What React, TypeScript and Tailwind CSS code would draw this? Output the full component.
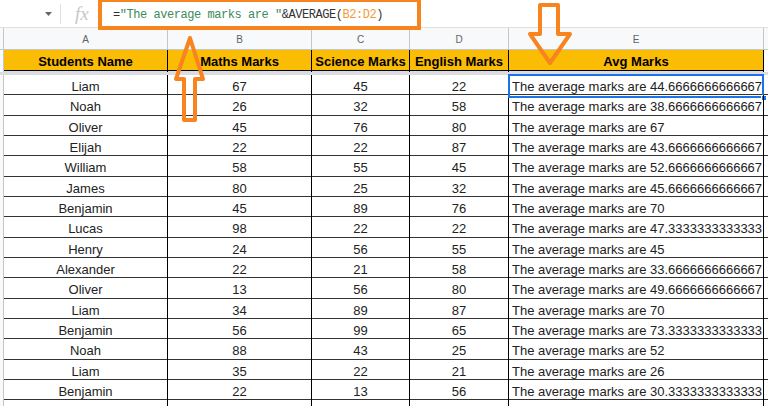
import React from 'react';

type Row = { name: string; maths: number; science: number; english: number };

const rows: Row[] = [
  { name: 'Liam', maths: 67, science: 45, english: 22 },
  { name: 'Noah', maths: 26, science: 32, english: 58 },
  { name: 'Oliver', maths: 45, science: 76, english: 80 },
  { name: 'Elijah', maths: 22, science: 22, english: 87 },
  { name: 'William', maths: 58, science: 55, english: 45 },
  { name: 'James', maths: 80, science: 25, english: 32 },
  { name: 'Benjamin', maths: 45, science: 89, english: 76 },
  { name: 'Lucas', maths: 98, science: 22, english: 22 },
  { name: 'Henry', maths: 24, science: 56, english: 55 },
  { name: 'Alexander', maths: 22, science: 21, english: 58 },
  { name: 'Oliver', maths: 13, science: 56, english: 80 },
  { name: 'Liam', maths: 34, science: 89, english: 87 },
  { name: 'Benjamin', maths: 56, science: 99, english: 65 },
  { name: 'Noah', maths: 88, science: 43, english: 25 },
  { name: 'Liam', maths: 35, science: 22, english: 21 },
  { name: 'Benjamin', maths: 22, science: 13, english: 56 },
];

// sheets prints 15 significant digits
const avgText = (r: Row) => {
  const avg = (r.maths + r.science + r.english) / 3;
  return `The average marks are ${parseFloat(avg.toPrecision(15))}`;
};

const cols = 'grid grid-cols-[4px_164px_144px_98px_99px_255px_4px]';

function LetterRow() {
  const letters = ['A', 'B', 'C', 'D', 'E'];
  return (
    <div className={`${cols} h-[22px] bg-[#f8f9fa] border-b border-[#c4c7c5]`}>
      <div className="bg-[#f8f9fa] border-r border-[#c4c7c5]" />
      {letters.map((l) => (
        <div
          key={l}
          className="flex items-center justify-center border-r border-[#c4c7c5] pt-[2px] text-[10px] text-[#5f6368]"
        >
          {l}
        </div>
      ))}
      <div />
    </div>
  );
}

function HeaderRow() {
  const heads = ['Students Name', 'Maths Marks', 'Science Marks', 'English Marks', 'Avg Marks'];
  return (
    <div className={`${cols} h-[21px] border-b border-black bg-[#fbbc04]`}>
      <div className="bg-[#f8f9fa] border-r border-[#c4c7c5]" />
      {heads.map((h) => (
        <div
          key={h}
          className="flex items-center justify-center whitespace-nowrap border-r border-black pt-[2px] text-[13px] font-bold text-black"
        >
          {h}
        </div>
      ))}
      <div className="bg-white" />
    </div>
  );
}

function DataRow({ row, selected }: { row?: Row; selected?: boolean }) {
  const cell = 'flex items-center justify-center border-r border-black pt-[2px]';
  return (
    <div className={`${cols} h-[20.33px] border-b border-[#333] text-[13px] text-[#222]`}>
      <div className="bg-[#f8f9fa] border-r border-[#c4c7c5]" />
      <div className={cell}>{row?.name}</div>
      <div className={cell}>{row?.maths}</div>
      <div className={cell}>{row?.science}</div>
      <div className={cell}>{row?.english}</div>
      <div className="relative flex items-center whitespace-nowrap border-r border-black pl-[3px] pt-[2px]">
        {row && avgText(row)}
        {selected && (
          <>
            <div className="absolute -inset-px border-2 border-[#1a73e8]" />
            <div className="absolute -bottom-[4px] -right-[4px] h-[6px] w-[6px] border border-white bg-[#1a73e8]" />
          </>
        )}
      </div>
      <div />
    </div>
  );
}

function FormulaBar() {
  return (
    <div className="flex h-[28px] items-center border-b border-[#e0e0e0] bg-white">
      <div className="flex w-[60px] justify-end pr-[8px]">
        <svg width="7" height="4" viewBox="0 0 7 4">
          <path d="M0 0h7L3.5 4z" fill="#666" />
        </svg>
      </div>
      <div className="h-[20px] w-px bg-[#e0e0e0]" />
      <div className="w-[52px] pl-[14px] font-['Liberation_Serif',serif] text-[19px] italic leading-none text-[#c8c8c8]">
        fx
      </div>
      <div className="pt-[3px] font-['Liberation_Mono',monospace] text-[12px] tracking-[-0.45px] whitespace-pre text-[#333]">
        =<span className="text-[#3c8a5a]">"The average marks are "</span>&amp;AVERAGE(
        <span className="text-[#f29b38]">B2:D2</span>)
      </div>
    </div>
  );
}

export default function App() {
  return (
    <div className="relative h-[406px] w-[768px] overflow-hidden bg-white font-['Liberation_Sans',Arial,sans-serif]">
      <FormulaBar />
      <LetterRow />
      <HeaderRow />
      <div className="h-[4px] bg-[#dadce0]" />
      {rows.map((r, i) => (
        <DataRow key={i} row={r} selected={i === 0} />
      ))}
      <DataRow />

      {/* annotation overlays */}
      <div className="absolute left-[98px] top-[-2px] h-[32px] w-[323px] border-4 border-[#f7841f]" />
      <svg className="absolute left-0 top-0" width="768" height="406" viewBox="0 0 768 406" fill="none">
        <path
          d="M190 38 L203 79 L195 79 L195 120 L184 120 L184 79 L176 79 Z"
          stroke="#f7841f"
          strokeWidth="4"
          strokeLinejoin="round"
        />
        <path
          d="M540 5 L558 5 L558 34 L570 34 L550 63 L530 34 L540 34 Z"
          stroke="#f7841f"
          strokeWidth="4"
          strokeLinejoin="round"
        />
      </svg>
    </div>
  );
}
